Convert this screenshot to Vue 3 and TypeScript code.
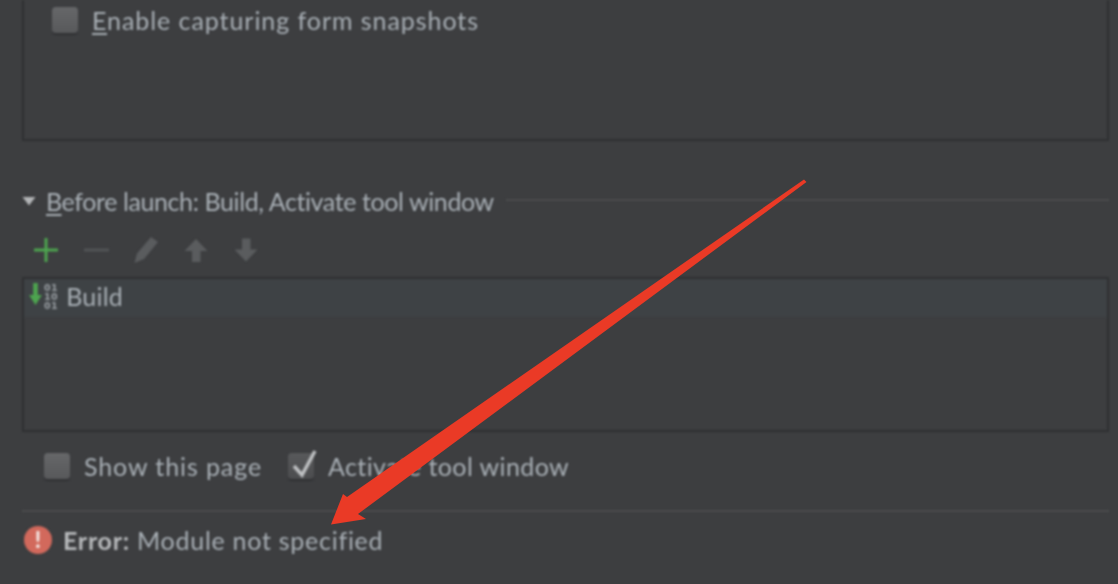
<script setup lang="ts">
const tools = ['remove', 'edit', 'up', 'down'] as const
</script>

<template>
  <div class="screen">
    <div class="page">
      <section class="top-panel">
        <label class="check top-check">
          <span class="box"></span>
          <span class="lbl sp-top"><u>E</u>nable capturing form snapshots</span>
        </label>
      </section>

      <header class="group-head">
        <svg class="caret" width="14" height="10" viewBox="0 0 14 10"><path d="M0.5 1H13.5L7 9.5Z" fill="#b3b5b7" /></svg>
        <span class="lbl sp-before"><u>B</u>efore launch: Build, Activate tool window</span>
        <span class="rule"></span>
      </header>

      <div class="toolbar">
        <svg width="26" height="26" viewBox="0 0 26 26"><path d="M11.500 1h3v10.500H25v3H14.500V25h-3V14.500H1v-3h10.500z" fill="#4da44f" /></svg>
        <svg v-for="t in tools" :key="t" width="26" height="26" viewBox="0 0 26 26">
          <path v-if="t === 'remove'" d="M1 11.500h25v3H1z" fill="#525456" />
          <path v-else-if="t === 'edit'" d="M18 2.500l7 5L11 24.500l-9.500 4L4 19z" fill="#5a5c5e" transform="translate(0 -2.500)" />
          <path v-else-if="t === 'up'" d="M13 2L24.500 14H17.500V25H9V14H1.500Z" fill="#5a5c5e" />
          <path v-else d="M9 1.500H17.500V12.500H24.500L13 24.500L1.500 12.500H9Z" fill="#5a5c5e" />
        </svg>
      </div>

      <section class="list">
        <div class="row">
          <svg class="build-arrow" width="13" height="22" viewBox="0 0 14 24"><path d="M4.500 0h5v13H14L7 24L0 13H4.500z" fill="#4da44f" /></svg>
          <span class="bits"><span>01</span><span>10</span><span>01</span></span>
          <span class="lbl build">Build</span>
        </div>
      </section>

      <div class="options">
        <label class="check">
          <span class="box"></span>
          <span class="lbl sp-show">Show this page</span>
        </label>
        <label class="check activate">
          <span class="box box-on">
            <svg class="tick" width="28" height="30" viewBox="0 0 28 30"><path d="M5 18l8 9L26 3" fill="none" stroke="#bfc1c3" stroke-width="3.500" /></svg>
          </span>
          <span class="lbl sp-activate">Activate tool window</span>
        </label>
      </div>

      <footer class="status">
        <span class="err-icon">!</span>
        <span class="lbl sp-error"><b>Error:</b> Module not specified</span>
      </footer>
    </div>

    <svg class="arrow" width="1118" height="584" viewBox="0 0 1118 584">
      <path d="M804 179.500L806.500 182L358 514L366 519L331 524.500L343 494L347 497Z" fill="#ea3a26" />
    </svg>
  </div>
</template>

<style>
html, body { margin: 0; background: #3d3e40; }
</style>

<style scoped>
.screen {
  position: relative;
  width: 1118px;
  height: 584px;
  overflow: hidden;
  background: #3d3e40;
}
.page {
  width: 1118px;
  height: 584px;
  box-sizing: border-box;
  padding: 0 9px 0 22px;
  display: flex;
  flex-direction: column;
  font-family: Lato, "Noto Sans", sans-serif;
  font-size: 25px;
  color: #a9b0b6;
  filter: blur(0.8px);
}
.lbl { white-space: nowrap; line-height: 30px; }
.lbl u { text-underline-offset: 3px; text-decoration-thickness: 2px; }
.sp-top { letter-spacing: 0.94px; }
.sp-before { letter-spacing: -0.4px; }
.sp-show { letter-spacing: 0.9px; }
.sp-activate { letter-spacing: 0.4px; }
.sp-error { letter-spacing: 0.73px; }
.top-panel {
  height: 141px;
  box-sizing: border-box;
  border: 2px solid #2f3032;
  border-top: 0;
  padding: 5px 0 0 28px;
  flex: none;
}
.check { display: flex; align-items: center; gap: 14px; }
.top-check { gap: 14px; }
.box {
  position: relative;
  flex: none;
  width: 26px;
  height: 26px;
  border-radius: 4px;
  background: linear-gradient(#666769, #58595b);
  box-shadow: 0 2px 0 #303133;
}
.box-on { background: linear-gradient(#58595b, #4c4d4f); }
.group-head {
  margin-top: 45px;
  height: 30px;
  display: flex;
  align-items: center;
  flex: none;
}
.caret { margin-right: 10px; }
.rule { flex: 1; height: 2px; margin-left: 12px; margin-top: -2px; background: #4b4c4e; }
.toolbar {
  margin: 21px 0 0 11px;
  height: 26px;
  display: flex;
  gap: 24px;
  flex: none;
}
.list {
  margin-top: 14px;
  height: 155px;
  box-sizing: border-box;
  border: 2px solid #2f3032;
  flex: none;
}
.row {
  height: 38px;
  box-sizing: border-box;
  padding: 0 0 4px 5px;
  background: #3e4245;
  display: flex;
  align-items: center;
}
.build-arrow { margin-top: -4px; }
.bits {
  display: flex;
  flex-direction: column;
  margin-left: 2px;
  font-family: "DejaVu Sans", sans-serif;
  font-size: 9.500px;
  font-weight: 700;
  line-height: 9px;
  letter-spacing: 0.5px;
  color: #9a9fa4;
}
.build { margin-left: 8px; letter-spacing: 0.2px; }
.options {
  margin-top: 17px;
  padding-left: 22px;
  display: flex;
  gap: 26px;
  height: 34px;
  align-items: center;
  flex: none;
}
.tick { position: absolute; left: 1px; top: -5px; }
.status {
  margin-top: 27px;
  padding-top: 13px;
  border-top: 2px solid #4b4c4e;
  display: flex;
  align-items: center;
  gap: 11px;
  flex: none;
}
.err-icon {
  width: 28px;
  height: 28px;
  margin-left: 2px;
  border-radius: 50%;
  background: #d2695c;
  color: #f4e6e3;
  font-weight: 900;
  font-size: 22px;
  line-height: 28px;
  text-align: center;
  flex: none;
}
.status b { color: #b8babc; font-weight: 700; }
.arrow { position: absolute; left: 0; top: 0; pointer-events: none; filter: blur(0.4px); }
</style>
